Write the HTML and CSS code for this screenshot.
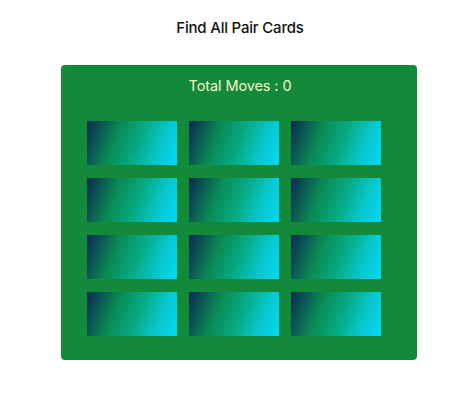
FILE: index.html
```html
<!DOCTYPE html>
<html>
<head>
<meta charset="utf-8">
<link rel="stylesheet" href="styles.css">
</head>
<body>
<h1 class="title">Find All Pair Cards</h1>
<div class="board">
  <div class="moves">Total Moves : 0</div>
  <div class="grid">
    <div class="card"></div><div class="card"></div><div class="card"></div>
    <div class="card"></div><div class="card"></div><div class="card"></div>
    <div class="card"></div><div class="card"></div><div class="card"></div>
    <div class="card"></div><div class="card"></div><div class="card"></div>
  </div>
</div>
</body>
</html>
```
FILE: styles.css
```css
html, body {
  margin: 0;
  padding: 0;
  background: #fff;
  font-family: Inter, "Noto Sans", sans-serif;
}
body {
  width: 474px;
  height: 406px;
  display: flex;
  flex-direction: column;
  align-items: center;
}
.title {
  margin: 19px 0 0 6px;
  font-size: 15px;
  font-weight: 500;
  line-height: 18px;
  color: #111;
  letter-spacing: -0.2px;
}
.board {
  margin-top: 28px;
  margin-left: 4px;
  width: 356px;
  height: 295px;
  box-sizing: border-box;
  background: #138a3a;
  border-radius: 4px;
  padding: 12px 36px 0 26px;
}
.moves {
  text-align: center;
  color: #f6f4c6;
  font-size: 14.5px;
  line-height: 18px;
  margin-left: 12px;
  letter-spacing: -0.1px;
}
.grid {
  margin-top: 26px;
  display: grid;
  grid-template-columns: repeat(3, 90px);
  grid-auto-rows: 44px;
  column-gap: 12px;
  row-gap: 13px;
}
.card {
  background: linear-gradient(110deg, #0b2a52 0%, #0a8a55 32%, #08a980 55%, #07c8d0 80%, #07d8f4 100%);
}
```
